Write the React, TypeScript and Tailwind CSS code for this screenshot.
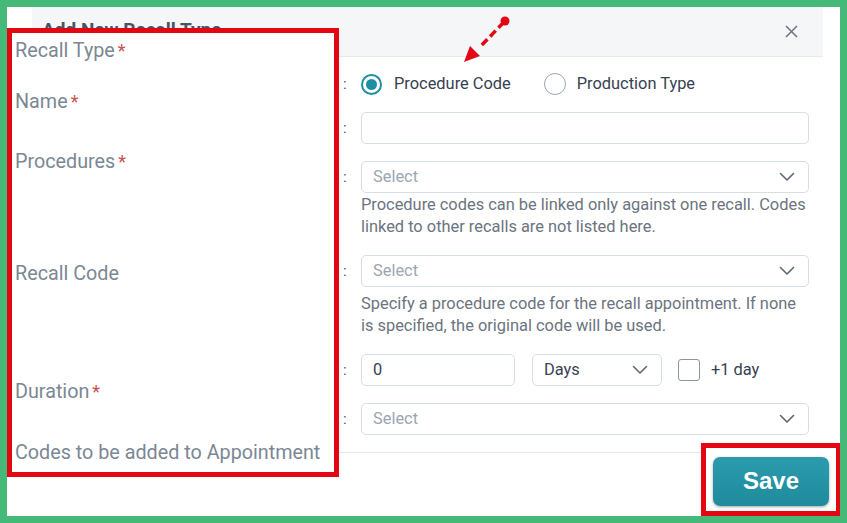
import React from "react";

const Chevron = ({ className = "" }: { className?: string }) => (
  <svg width="16" height="10" viewBox="0 0 16 10" className={className} fill="none">
    <path d="M1.5 1.5L8 8L14.5 1.5" stroke="#5b6675" strokeWidth="1.6" strokeLinecap="round" strokeLinejoin="round" />
  </svg>
);

const Colon = () => <span className="w-[18px] text-[15px] text-[#4b5563] leading-none">:</span>;

const SelectBox = ({ text = "Select", placeholder = true, className = "" }: { text?: string; placeholder?: boolean; className?: string }) => (
  <div className={`h-[32px] border border-[#d7dde5] rounded-[5px] bg-white flex items-center justify-between pl-[11px] pr-[13px] ${className}`}>
    <span className={`text-[16.4px] ${placeholder ? "text-[#9ba6b2]" : "text-[#374151]"}`}>{text}</span>
    <Chevron />
  </div>
);

const Label = ({ text, req, className = "" }: { text: string; req?: boolean; className?: string }) => (
  <div className={`text-[19.75px] leading-[24px] text-[#7b8794] whitespace-nowrap ${className}`}>
    {text}
    {req && <span className="text-[#c9514f] ml-[3px] text-[18px]">*</span>}
  </div>
);

export default function App() {
  return (
    <div className="w-[847px] h-[523px] bg-[#44b978] p-[7px]" style={{ fontFamily: "Roboto, 'Liberation Sans', sans-serif" }}>
      <div className="relative w-full h-full bg-white overflow-hidden">
        {/* Modal */}
        <div className="ml-[25px] w-[791px] h-full flex flex-col">
          <div className="h-[50px] shrink-0 bg-[#f5f6f8] border-b border-[#e6e9ee] flex items-center justify-between pl-[10px] pr-[25px]">
            <span className="text-[19px] font-bold text-[#4a5563] -mt-[3px]">Add New Recall Type</span>
            <svg width="13" height="13" viewBox="0 0 13 13">
              <path d="M1 1L12 12M12 1L1 12" stroke="#6b7480" strokeWidth="1.5" />
            </svg>
          </div>
          <div className="flex flex-col pl-[311px] pr-[14px]">
            {/* Recall type radios */}
            <div className="flex items-center h-[32px] mt-[11px]">
              <Colon />
              <div className="w-[21px] h-[21px] rounded-full border-2 border-[#1d8fa3] flex items-center justify-center">
                <div className="w-[11px] h-[11px] rounded-full bg-[#1d8fa3]" />
              </div>
              <span className="ml-[12px] text-[16.4px] text-[#374151]">Procedure Code</span>
              <div className="ml-[33px] w-[22px] h-[22px] rounded-full border border-[#9aa5b1]" />
              <span className="ml-[11px] text-[16.4px] text-[#374151]">Production Type</span>
            </div>
            {/* Name */}
            <div className="flex items-center mt-[12px]">
              <Colon />
              <div className="flex-1 h-[32px] border border-[#d7dde5] rounded-[5px]" />
            </div>
            {/* Procedures */}
            <div className="flex mt-[17px]">
              <div className="h-[32px] flex items-center"><Colon /></div>
              <div className="flex-1">
                <SelectBox />
                <p className="mt-[1px] text-[16.4px] leading-[22px] text-[#6b7480]">
                  Procedure codes can be linked only against one recall. Codes linked to other recalls are not listed here.
                </p>
              </div>
            </div>
            {/* Recall code */}
            <div className="flex mt-[17px]">
              <div className="h-[32px] flex items-center"><Colon /></div>
              <div className="flex-1">
                <SelectBox />
                <p className="mt-[6px] text-[16.4px] leading-[22px] text-[#6b7480]">
                  Specify a procedure code for the recall appointment. If none is specified, the original code will be used.
                </p>
              </div>
            </div>
            {/* Duration */}
            <div className="flex items-center mt-[17px]">
              <Colon />
              <div className="w-[154px] h-[32px] border border-[#d7dde5] rounded-[5px] flex items-center pl-[11px] text-[16.4px] text-[#374151]">0</div>
              <SelectBox text="Days" placeholder={false} className="ml-[17px] w-[130px]" />
              <div className="ml-[16px] w-[22px] h-[22px] border border-[#8a96a3] rounded-[3px]" />
              <span className="ml-[11px] text-[16.4px] text-[#374151]">+1 day</span>
            </div>
            {/* Codes */}
            <div className="flex items-center mt-[17px]">
              <Colon />
              <div className="flex-1"><SelectBox /></div>
            </div>
          </div>
          <div className="mt-[17px] border-t border-[#e6e9ee] flex justify-end pr-[14px] pt-[12px]">
            <div className="mr-[30px] h-[33px] px-[10px] border border-[#1d8fa3] rounded-[5px] flex items-center text-[16.4px] text-[#1d8fa3]">Cancel</div>
          </div>
        </div>

        {/* Annotation: labels box */}
        <div className="absolute left-0 top-[21px] w-[332px] h-[449px] border-[5px] border-[#e30613] bg-white pl-[3px] pt-[4px] flex flex-col">
          <Label text="Recall Type" req className="mt-[2px]" />
          <Label text="Name" req className="mt-[27px]" />
          <Label text="Procedures" req className="mt-[36px]" />
          <Label text="Recall Code" className="mt-[88px]" />
          <Label text="Duration" req className="mt-[94px]" />
          <Label text="Codes to be added to Appointment" className="mt-[37px]" />
        </div>

        {/* Annotation: Save box */}
        <div className="absolute left-[694px] top-[436px] w-[140px] h-[73px] border-[5px] border-[#e30613] bg-white flex items-center justify-center">
          <div className="w-[116px] h-[49px] mt-[3px] rounded-[7px] bg-gradient-to-b from-[#2a9bad] to-[#1f8b9d] shadow-[0_1px_3px_rgba(0,0,0,0.35)] flex items-center justify-center">
            <span className="text-white text-[24px] font-bold" style={{ fontFamily: "'Liberation Sans', Arial, sans-serif" }}>Save</span>
          </div>
        </div>

        {/* Annotation: arrow */}
        <svg className="absolute left-[450px] top-[5px]" width="60" height="60" viewBox="0 0 60 60">
          <circle cx="48" cy="9" r="4.5" fill="#e30613" />
          <line x1="47" y1="10" x2="23" y2="35" stroke="#e30613" strokeWidth="3.5" strokeDasharray="8 4" />
          <path d="M7 50 L13 34 L23 44 Z" fill="#e30613" />
        </svg>
      </div>
    </div>
  );
}
